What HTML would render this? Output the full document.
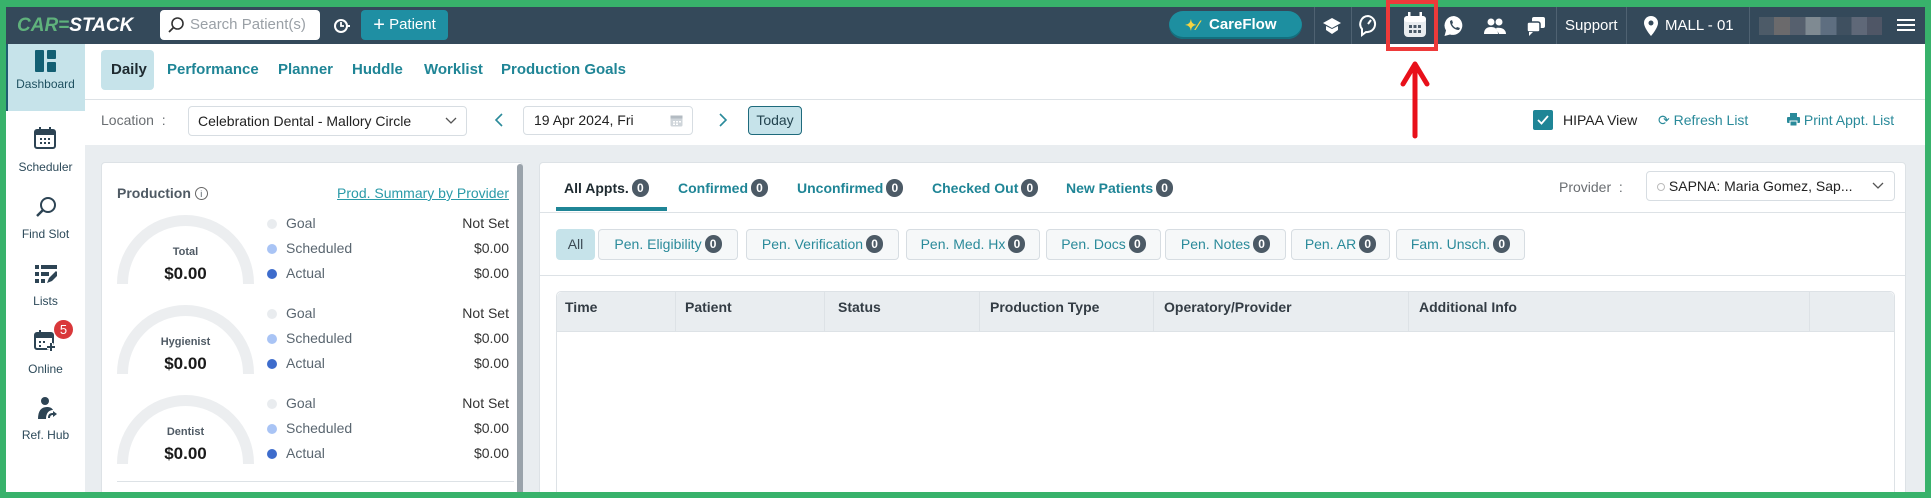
<!DOCTYPE html>
<html><head><meta charset="utf-8"><style>
*{box-sizing:border-box;margin:0;padding:0}
body{width:1931px;height:498px;overflow:hidden;background:#38b26b;font-family:"Liberation Sans",Arial,sans-serif;position:relative}
.a{position:absolute}
#app{position:absolute;left:6px;top:7px;width:1919px;height:485px;background:#e9edf0;overflow:hidden}
#top{left:0;top:0;width:1919px;height:37px;background:#34495a}
.t{color:#fff;font-size:15px}
.sep{top:0;width:1px;height:37px;background:#4f6272}
#side{left:0;top:37px;width:79px;height:448px;background:#fff}
.si{left:0;width:79px;text-align:center;font-size:12px;color:#2d4a5a}
.nav{font-size:15px;font-weight:bold;color:#1f8596}
.chip{top:222px;height:31px;border:1px solid #d7dde2;border-radius:4px;background:#f6f8f9;color:#2a8a9a;font-size:14px;line-height:29px;text-align:center;white-space:nowrap}
.b{display:inline-block;background:#4c5a66;color:#fff;border-radius:9px;width:17px;height:18px;line-height:18px;text-align:center;font-size:12px;font-weight:bold;vertical-align:1px;margin-left:3px}
.tab{top:172px;font-size:14px;font-weight:bold;color:#1f8596;white-space:nowrap}
.th{top:292px;font-size:14px;font-weight:bold;color:#333c44}
.lg{font-size:14px;color:#5a6670}
.dot{width:10px;height:10px;border-radius:5px}
.val{left:403px;width:106px;font-size:14px;color:#333;text-align:right}
.vl{top:285px;width:1px;height:40px;background:#dde2e6}
</style></head><body>
<div id="app">
 <div id="top" class="a">
  <div class="a" style="left:11px;top:8px;font-size:19px;font-weight:bold;font-style:italic"><span style="color:#5fb27c">CAR=</span><span style="color:#fff">STACK</span></div>
  <div class="a" style="left:154px;top:3px;width:160px;height:30px;background:#fff;border-radius:4px"><svg class="a" style="left:7px;top:6px" width="18" height="18" viewBox="0 0 18 18"><circle cx="10.5" cy="7.5" r="5.5" fill="none" stroke="#333" stroke-width="1.6"/><path d="M6.5 11.5L2 16" stroke="#333" stroke-width="1.8"/></svg><span class="a" style="left:30px;top:6px;font-size:15px;color:#9aa0a6">Search Patient(s)</span></div>
  <svg class="a" style="left:327px;top:10px" width="18" height="18" viewBox="0 0 18 18"><circle cx="8" cy="9" r="6" fill="none" stroke="#fff" stroke-width="2"/><path d="M8 5v4h3" stroke="#fff" stroke-width="1.8" fill="none"/><path d="M14 9h3" stroke="#fff" stroke-width="2"/></svg>
  <div class="a" style="left:355px;top:3px;width:87px;height:30px;background:#1f8fa3;border-radius:4px;color:#fff;font-size:15px;line-height:30px;text-align:center"><span style="font-size:20px;vertical-align:-2px">+</span> Patient</div>
  <div class="a" style="left:1163px;top:4px;width:133px;height:28px;background:#1d8fa0;border-radius:14px;color:#fff;font-weight:bold;font-size:15px;line-height:28px;padding-left:40px;box-shadow:inset 0 -2px 0 #136f7e">CareFlow<span class="a" style="left:16px;top:0;color:#f5d442;font-size:14px">✦⁄</span></div>
  <div class="sep a" style="left:1308px"></div>
  <svg class="a" style="left:1316px;top:10px" width="20" height="18" viewBox="0 0 20 18"><path d="M10 1L1 6l9 5 9-5z" fill="#fff"/><path d="M4 9v4l6 4 6-4V9l-6 3z" fill="#fff"/></svg>
  <div class="sep a" style="left:1345px"></div>
  <svg class="a" style="left:1352px;top:8px" width="20" height="22" viewBox="0 0 20 22"><path d="M10 1a8 8 0 0 0-6 13v6l4-3a8 8 0 1 0 2-16z" fill="none" stroke="#fff" stroke-width="2"/><path d="M10 9l3-4" stroke="#fff" stroke-width="2"/></svg>
  <svg class="a" style="left:1397px;top:5px" width="24" height="26" viewBox="0 0 24 26"><rect x="1" y="4" width="22" height="21" rx="4" fill="#e8ecef"/><rect x="1" y="4" width="22" height="6" rx="3" fill="#fff"/><rect x="5" y="0" width="2.5" height="6" fill="#fff"/><rect x="16.5" y="0" width="2.5" height="6" fill="#fff"/><g fill="#4a5a68"><rect x="6" y="13" width="3" height="3"/><rect x="10.5" y="13" width="3" height="3"/><rect x="15" y="13" width="3" height="3"/><rect x="6" y="18" width="3" height="3"/><rect x="10.5" y="18" width="3" height="3"/><rect x="15" y="18" width="3" height="3"/></g></svg>
  <svg class="a" style="left:1437px;top:8px" width="22" height="22" viewBox="0 0 22 22"><path d="M11 1a9.5 9.5 0 0 0-8 14.5L1.5 21l5.5-1.5A9.5 9.5 0 1 0 11 1z" fill="#fff"/><path d="M7 6c0 5 4 9 9 9l1-2-3-1-1 1c-2-1-3-2-4-4l1-1-1-3z" fill="#34495a"/></svg>
  <svg class="a" style="left:1478px;top:10px" width="22" height="18" viewBox="0 0 22 18"><circle cx="7" cy="5" r="3.5" fill="#fff"/><circle cx="15" cy="5" r="3.5" fill="#fff"/><path d="M0 17c0-5 3-7 7-7s7 2 7 7zM12 11c5-1 10 1 10 6h-7z" fill="#fff"/></svg>
  <svg class="a" style="left:1520px;top:9px" width="20" height="20" viewBox="0 0 20 20"><rect x="6" y="1" width="13" height="11" rx="2" fill="#fff"/><rect x="1" y="6" width="13" height="10" rx="2" fill="#fff" stroke="#34495a" stroke-width="1.5"/><path d="M3 16v4l4-4z" fill="#fff"/></svg>
  <div class="sep a" style="left:1550px"></div>
  <span class="a t" style="left:1559px;top:10px">Support</span>
  <div class="sep a" style="left:1620px"></div>
  <svg class="a" style="left:1638px;top:9px" width="14" height="20" viewBox="0 0 14 20"><path d="M7 0a7 7 0 0 0-7 7c0 5 7 13 7 13s7-8 7-13a7 7 0 0 0-7-7z" fill="#fff"/><circle cx="7" cy="7" r="2.5" fill="#34495a"/></svg>
  <span class="a t" style="left:1659px;top:10px">MALL - 01</span>
  <div class="sep a" style="left:1743px"></div>
  <div class="a" style="left:1753px;top:10px;width:123px;height:18px;background:linear-gradient(90deg,#4d5b68 0,#4d5b68 12%,#6b6a6c 12%,#6b6a6c 25%,#56606e 25%,#56606e 38%,#7f8a92 38%,#7f8a92 50%,#5e6e80 50%,#5e6e80 63%,#3f5060 63%,#3f5060 75%,#5f6878 75%,#5f6878 88%,#4f5666 88%)"></div>
  <div class="a" style="left:1891px;top:12px;width:18px;height:2px;background:#fff;box-shadow:0 5px 0 #fff,0 10px 0 #fff"></div>
 </div>

 <div id="side" class="a">
  <div class="a" style="left:0;top:0;width:79px;height:67px;background:#c6e3ea;border-left:2px solid #1e5d70"></div>
  <svg class="a" style="left:29px;top:6px" width="21" height="22" viewBox="0 0 21 22"><rect x="0" y="0" width="9" height="22" rx="1" fill="#135f73"/><rect x="12" y="0" width="9" height="9" rx="1" fill="#135f73"/><rect x="12" y="12" width="9" height="10" rx="1" fill="#135f73"/></svg>
  <div class="si a" style="top:33px;color:#1e5060">Dashboard</div>
  <svg class="a" style="left:28px;top:83px" width="22" height="22" viewBox="0 0 22 22"><rect x="1" y="3" width="20" height="18" rx="2" fill="none" stroke="#2d4454" stroke-width="2"/><rect x="1" y="3" width="20" height="5" fill="#2d4454"/><rect x="5" y="0" width="2" height="5" fill="#2d4454"/><rect x="15" y="0" width="2" height="5" fill="#2d4454"/><g fill="#2d4454"><rect x="6" y="11" width="2" height="2"/><rect x="10" y="11" width="2" height="2"/><rect x="14" y="11" width="2" height="2"/><rect x="6" y="15" width="2" height="2"/><rect x="10" y="15" width="2" height="2"/><rect x="14" y="15" width="2" height="2"/></g></svg>
  <div class="si a" style="top:116px">Scheduler</div>
  <svg class="a" style="left:29px;top:152px" width="22" height="22" viewBox="0 0 22 22"><circle cx="13" cy="9" r="7" fill="none" stroke="#2d4454" stroke-width="2"/><path d="M8 14l-6 6" stroke="#2d4454" stroke-width="2.5"/></svg>
  <div class="si a" style="top:183px">Find Slot</div>
  <svg class="a" style="left:29px;top:221px" width="22" height="18" viewBox="0 0 22 18"><g fill="#2d4454"><rect x="0" y="0" width="4" height="4"/><rect x="6" y="0" width="16" height="4"/><rect x="0" y="7" width="4" height="4"/><rect x="6" y="7" width="8" height="4"/><rect x="0" y="14" width="4" height="4"/><rect x="6" y="14" width="4" height="4"/><path d="M12 18l2-5 7-7 3 3-7 7z"/></g></svg>
  <div class="si a" style="top:250px">Lists</div>
  <svg class="a" style="left:28px;top:286px" width="24" height="22" viewBox="0 0 24 22"><rect x="1" y="3" width="18" height="16" rx="2" fill="none" stroke="#2d4454" stroke-width="2"/><rect x="1" y="3" width="18" height="5" fill="#2d4454"/><rect x="5" y="0" width="2" height="5" fill="#2d4454"/><g fill="#2d4454"><rect x="5" y="11" width="2" height="2"/><rect x="9" y="11" width="2" height="2"/><rect x="5" y="15" width="2" height="2"/></g><path d="M17 13v8M13 17h8" stroke="#fff" stroke-width="5"/><path d="M17 13v8M13 17h8" stroke="#2d4454" stroke-width="2"/></svg>
  <div class="a" style="left:48px;top:276px;width:19px;height:19px;border-radius:10px;background:#d9383a;color:#fff;font-size:13px;text-align:center;line-height:19px">5</div>
  <div class="si a" style="top:318px">Online</div>
  <svg class="a" style="left:31px;top:353px" width="20" height="22" viewBox="0 0 20 22"><circle cx="8" cy="4" r="4" fill="#2d4454"/><path d="M1 22c0-8 3-12 9-12 3 0 5 1 6 3-4 0-7 3-7 9z" fill="#2d4454"/><path d="M11 21c0-4 2-5 5-5v-2l4 3-4 3v-2c-2 0-3 1-3 3z" fill="#2d4454"/></svg>
  <div class="si a" style="top:384px">Ref. Hub</div>
 </div>

 <div class="a" style="left:79px;top:37px;width:1840px;height:101px;background:#fff"></div>
 <div class="a" style="left:79px;top:92px;width:1840px;height:1px;background:#dde2e6"></div>
 <div class="a" style="left:95px;top:43px;width:53px;height:40px;background:#c6e3ea;border-radius:4px"></div>
 <span class="a nav" style="left:105px;top:54px;color:#1e2a30">Daily</span>
 <span class="a nav" style="left:161px;top:54px">Performance</span>
 <span class="a nav" style="left:272px;top:54px">Planner</span>
 <span class="a nav" style="left:346px;top:54px">Huddle</span>
 <span class="a nav" style="left:418px;top:54px">Worklist</span>
 <span class="a nav" style="left:495px;top:54px">Production Goals</span>

 <span class="a" style="left:95px;top:105px;font-size:14px;color:#6a6e72">Location &nbsp;:</span>
 <div class="a" style="left:182px;top:99px;width:279px;height:30px;border:1px solid #d7dde2;border-radius:4px;font-size:14px;line-height:28px;padding-left:9px;color:#222;white-space:nowrap">Celebration Dental - Mallory Circle<svg class="a" style="right:9px;top:10px" width="12" height="8" viewBox="0 0 12 8"><path d="M1 1l5 5 5-5" stroke="#555" fill="none" stroke-width="1.3"/></svg></div>
 <svg class="a" style="left:488px;top:106px" width="10" height="14" viewBox="0 0 10 14"><path d="M8 1L2 7l6 6" stroke="#2a8a9a" fill="none" stroke-width="1.6"/></svg>
 <div class="a" style="left:517px;top:99px;width:170px;height:29px;border:1px solid #d7dde2;border-radius:4px;font-size:14px;line-height:27px;padding-left:10px;color:#222">19 Apr 2024, Fri<svg class="a" style="right:9px;top:7px" width="13" height="13" viewBox="0 0 13 13"><rect x="0.5" y="1.5" width="12" height="11" rx="1.5" fill="#cfd5da"/><rect x="0.5" y="1.5" width="12" height="3" fill="#b3bbc2"/><g fill="#fff"><rect x="3" y="7" width="2" height="1.5"/><rect x="6" y="7" width="2" height="1.5"/><rect x="9" y="7" width="2" height="1.5"/><rect x="3" y="9.5" width="2" height="1.5"/><rect x="6" y="9.5" width="2" height="1.5"/></g></svg></div>
 <svg class="a" style="left:712px;top:106px" width="10" height="14" viewBox="0 0 10 14"><path d="M2 1l6 6-6 6" stroke="#2a8a9a" fill="none" stroke-width="1.6"/></svg>
 <div class="a" style="left:742px;top:99px;width:54px;height:29px;border:1px solid #1e6a7c;border-radius:4px;background:#c6e3ea;font-size:14px;line-height:27px;text-align:center;color:#22434f">Today</div>

 <div class="a" style="left:1527px;top:103px;width:20px;height:20px;background:#1f8596;border-radius:2px"><svg width="20" height="20" viewBox="0 0 20 20"><path d="M5 10l3.5 3.5L15 6" stroke="#fff" fill="none" stroke-width="1.8"/></svg></div>
 <span class="a" style="left:1557px;top:105px;font-size:14px;color:#222">HIPAA View</span>
 <span class="a" style="left:1652px;top:105px;font-size:14px;color:#2a8a9a">⟳ Refresh List</span>
 <span class="a" style="left:1781px;top:105px;font-size:14px;color:#2a8a9a"><svg width="13" height="13" viewBox="0 0 13 13" style="vertical-align:-1px"><rect x="3" y="0" width="7" height="4" fill="#2a8a9a"/><rect x="0" y="4" width="13" height="6" rx="1" fill="#2a8a9a"/><rect x="3" y="8" width="7" height="5" fill="#2a8a9a" stroke="#fff"/></svg> Print Appt. List</span>

 <div class="a" style="left:95px;top:155px;width:422px;height:340px;background:#fff;border:1px solid #dde2e6;border-radius:4px"></div>
 <div class="a" style="left:511px;top:157px;width:6px;height:340px;background:#9aa3ab;border-radius:3px"></div>
 <span class="a" style="left:111px;top:178px;font-size:14px;font-weight:bold;color:#4f5a64">Production <span style="display:inline-block;width:13px;height:13px;border:1px solid #666;border-radius:7px;font-size:9px;text-align:center;line-height:12px;font-weight:normal;vertical-align:1px">i</span></span>
 <span class="a" style="left:303px;width:200px;text-align:right;top:178px;font-size:14px;color:#2a9aa8;text-decoration:underline">Prod. Summary by Provider</span>
 <div class="a" style="left:111px;top:474px;width:397px;height:1px;background:#dde2e6"></div>

 <div class="a" style="left:533px;top:155px;width:1367px;height:340px;background:#fff;border:1px solid #dde2e6;border-radius:4px"></div>
 <div class="a" style="left:534px;top:205px;width:1365px;height:1px;background:#dde2e6"></div>
 <div class="a" style="left:534px;top:268px;width:1365px;height:1px;background:#dde2e6"></div>
 <span class="tab a" style="left:558px;color:#1e2a30">All Appts.<span class="b">0</span></span>
 <div class="a" style="left:550px;top:200px;width:111px;height:4px;background:#1f8596"></div>
 <span class="tab a" style="left:672px">Confirmed<span class="b">0</span></span>
 <span class="tab a" style="left:791px">Unconfirmed<span class="b">0</span></span>
 <span class="tab a" style="left:926px">Checked Out<span class="b">0</span></span>
 <span class="tab a" style="left:1060px">New Patients<span class="b">0</span></span>
 <span class="a" style="left:1553px;top:172px;font-size:14px;color:#6a6e72">Provider &nbsp;:</span>
 <div class="a" style="left:1640px;top:164px;width:249px;height:30px;border:1px solid #d7dde2;border-radius:4px;font-size:14px;line-height:28px;padding-left:10px;color:#222;white-space:nowrap"><span style="display:inline-block;width:8px;height:8px;border:1px solid #bbb;border-radius:4px"></span> SAPNA: Maria Gomez, Sap...<svg class="a" style="right:10px;top:10px" width="12" height="8" viewBox="0 0 12 8"><path d="M1 1l5 5 5-5" stroke="#555" fill="none" stroke-width="1.3"/></svg></div>

 <div class="chip a" style="left:550px;width:39px;background:#c6e3ea;border-color:#c6e3ea;color:#3b4a54">All</div>
 <div class="chip a" style="left:592px;width:140px">Pen. Eligibility<span class="b">0</span></div>
 <div class="chip a" style="left:740px;width:153px">Pen. Verification<span class="b">0</span></div>
 <div class="chip a" style="left:900px;width:134px">Pen. Med. Hx<span class="b">0</span></div>
 <div class="chip a" style="left:1040px;width:115px">Pen. Docs<span class="b">0</span></div>
 <div class="chip a" style="left:1159px;width:121px">Pen. Notes<span class="b">0</span></div>
 <div class="chip a" style="left:1285px;width:99px">Pen. AR<span class="b">0</span></div>
 <div class="chip a" style="left:1390px;width:129px">Fam. Unsch.<span class="b">0</span></div>

 <div class="a" style="left:550px;top:284px;width:1339px;height:220px;border:1px solid #dde2e6;border-radius:5px"></div>
 <div class="a" style="left:551px;top:285px;width:1337px;height:40px;background:#e9edf0;border-bottom:1px solid #dde2e6;border-radius:5px 5px 0 0"></div>
 <div class="vl a" style="left:669px"></div>
 <div class="vl a" style="left:818px"></div>
 <div class="vl a" style="left:973px"></div>
 <div class="vl a" style="left:1147px"></div>
 <div class="vl a" style="left:1402px"></div>
 <div class="vl a" style="left:1803px"></div>
 <span class="th a" style="left:559px">Time</span>
 <span class="th a" style="left:679px">Patient</span>
 <span class="th a" style="left:832px">Status</span>
 <span class="th a" style="left:984px">Production Type</span>
 <span class="th a" style="left:1158px">Operatory/Provider</span>
 <span class="th a" style="left:1413px">Additional Info</span>
</div>

<div class="a" style="left:1386px;top:0;width:52px;height:51px;border:4px solid #ee3a3a"></div>

<div class="a" style="left:117px;top:215px;width:137px;height:69px;overflow:hidden"><div style="width:137px;height:137px;border:11px solid #eceef0;border-radius:50%"></div></div>
<div class="a" style="left:117px;top:246px;width:137px;text-align:center;font-size:11px;font-weight:bold;color:#4f5a64">Total</div>
<div class="a" style="left:117px;top:264px;width:137px;text-align:center;font-size:17px;font-weight:bold;color:#1a1a1a">$0.00</div>
<div class="a" style="left:117px;top:305px;width:137px;height:69px;overflow:hidden"><div style="width:137px;height:137px;border:11px solid #eceef0;border-radius:50%"></div></div>
<div class="a" style="left:117px;top:336px;width:137px;text-align:center;font-size:11px;font-weight:bold;color:#4f5a64">Hygienist</div>
<div class="a" style="left:117px;top:354px;width:137px;text-align:center;font-size:17px;font-weight:bold;color:#1a1a1a">$0.00</div>
<div class="a" style="left:117px;top:395px;width:137px;height:69px;overflow:hidden"><div style="width:137px;height:137px;border:11px solid #eceef0;border-radius:50%"></div></div>
<div class="a" style="left:117px;top:426px;width:137px;text-align:center;font-size:11px;font-weight:bold;color:#4f5a64">Dentist</div>
<div class="a" style="left:117px;top:444px;width:137px;text-align:center;font-size:17px;font-weight:bold;color:#1a1a1a">$0.00</div>

<div class="a dot" style="left:267px;top:219px;background:#e9ecef"></div><span class="a lg" style="left:286px;top:215px">Goal</span><span class="a val" style="top:215px">Not Set</span>
<div class="a dot" style="left:267px;top:244px;background:#a9c4f5"></div><span class="a lg" style="left:286px;top:240px">Scheduled</span><span class="a val" style="top:240px">$0.00</span>
<div class="a dot" style="left:267px;top:269px;background:#3e6ccc"></div><span class="a lg" style="left:286px;top:265px">Actual</span><span class="a val" style="top:265px">$0.00</span>
<div class="a dot" style="left:267px;top:309px;background:#e9ecef"></div><span class="a lg" style="left:286px;top:305px">Goal</span><span class="a val" style="top:305px">Not Set</span>
<div class="a dot" style="left:267px;top:334px;background:#a9c4f5"></div><span class="a lg" style="left:286px;top:330px">Scheduled</span><span class="a val" style="top:330px">$0.00</span>
<div class="a dot" style="left:267px;top:359px;background:#3e6ccc"></div><span class="a lg" style="left:286px;top:355px">Actual</span><span class="a val" style="top:355px">$0.00</span>
<div class="a dot" style="left:267px;top:399px;background:#e9ecef"></div><span class="a lg" style="left:286px;top:395px">Goal</span><span class="a val" style="top:395px">Not Set</span>
<div class="a dot" style="left:267px;top:424px;background:#a9c4f5"></div><span class="a lg" style="left:286px;top:420px">Scheduled</span><span class="a val" style="top:420px">$0.00</span>
<div class="a dot" style="left:267px;top:449px;background:#3e6ccc"></div><span class="a lg" style="left:286px;top:445px">Actual</span><span class="a val" style="top:445px">$0.00</span>

<svg class="a" style="left:1400px;top:60px" width="30" height="80" viewBox="0 0 30 80"><path d="M15 4L3 24M15 4l12 20M15 4v72" stroke="#e8101a" stroke-width="5" stroke-linecap="round" fill="none"/></svg>
</body></html>
